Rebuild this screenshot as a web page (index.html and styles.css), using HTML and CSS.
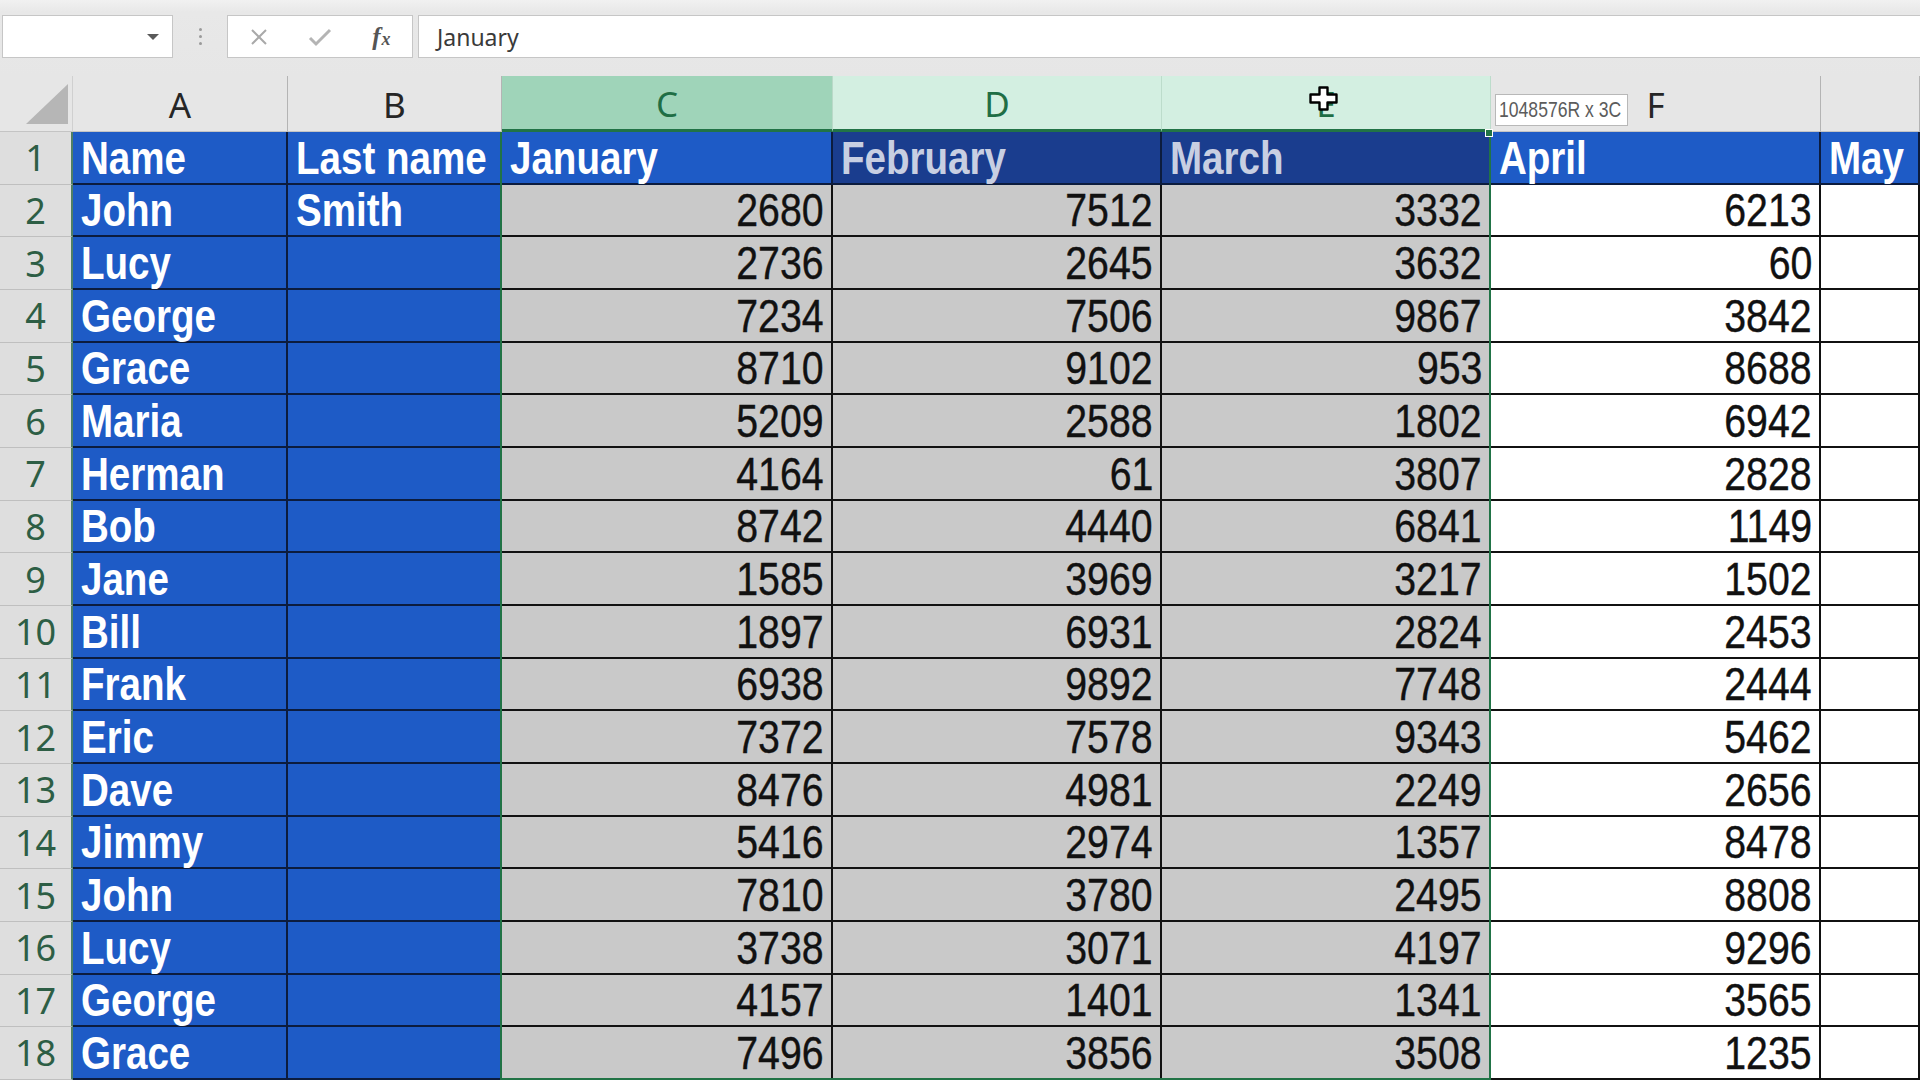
FILE: index.html
```html
<!DOCTYPE html>
<html>
<head>
<meta charset="utf-8">
<link rel="stylesheet" href="styles.css">
</head>
<body>
<div class="toolbar">
  <div class="namebox"><span class="caret"></span></div>
  <div class="grip"><i></i><i></i><i></i></div>
  <div class="fxbox">
    <span class="btn"><svg width="18" height="18" viewBox="0 0 18 18"><path d="M2 2 L16 16 M16 2 L2 16" stroke="#a9a9a9" stroke-width="2" fill="none"/></svg></span>
    <span class="btn"><svg width="24" height="20" viewBox="0 0 24 20"><path d="M2 11 L8 17 L22 3" stroke="#b4b4b4" stroke-width="3" fill="none"/></svg></span>
    <span class="btn fx"><i>f</i><i class="fxx">x</i></span>
  </div>
  <div class="formula">January</div>
</div>
<div class="sheet">
  <div class="hd corner"><svg width="42" height="40" viewBox="0 0 42 40"><path d="M42 0 L42 40 L0 40 Z" fill="#b6b6b6"/></svg></div>
  <div class="hd">A</div>
  <div class="hd">B</div>
  <div class="hd cs">C</div>
  <div class="hd ds">D</div>
  <div class="hd ds e">E<svg class="cursor" width="29" height="25" viewBox="0 0 29 25"><path d="M10.5 1.5 H18.5 V8.5 H27.5 V16.5 H18.5 V23.5 H10.5 V16.5 H1.5 V8.5 H10.5 Z" fill="#fff" stroke="#000" stroke-width="2.4" stroke-linejoin="round"/></svg></div>
  <div class="hd f">F<span class="tip"><span>1048576R x 3C</span></span></div>
  <div class="hd"></div>

  <div class="rh">1</div><div class="c bl"><span>Name</span></div><div class="c bl"><span>Last name</span></div><div class="c bl"><span>January</span></div><div class="c dk"><span>February</span></div><div class="c dk"><span>March</span></div><div class="c bl"><span>April</span></div><div class="c bl"><span>May</span></div>
  <div class="rh">2</div><div class="c bl"><span>John</span></div><div class="c bl"><span>Smith</span></div><div class="c sel n"><span>2680</span></div><div class="c sel n"><span>7512</span></div><div class="c sel n"><span>3332</span></div><div class="c n"><span>6213</span></div><div class="c"></div>
  <div class="rh">3</div><div class="c bl"><span>Lucy</span></div><div class="c bl"></div><div class="c sel n"><span>2736</span></div><div class="c sel n"><span>2645</span></div><div class="c sel n"><span>3632</span></div><div class="c n"><span>60</span></div><div class="c"></div>
  <div class="rh">4</div><div class="c bl"><span>George</span></div><div class="c bl"></div><div class="c sel n"><span>7234</span></div><div class="c sel n"><span>7506</span></div><div class="c sel n"><span>9867</span></div><div class="c n"><span>3842</span></div><div class="c"></div>
  <div class="rh">5</div><div class="c bl"><span>Grace</span></div><div class="c bl"></div><div class="c sel n"><span>8710</span></div><div class="c sel n"><span>9102</span></div><div class="c sel n"><span>953</span></div><div class="c n"><span>8688</span></div><div class="c"></div>
  <div class="rh">6</div><div class="c bl"><span>Maria</span></div><div class="c bl"></div><div class="c sel n"><span>5209</span></div><div class="c sel n"><span>2588</span></div><div class="c sel n"><span>1802</span></div><div class="c n"><span>6942</span></div><div class="c"></div>
  <div class="rh">7</div><div class="c bl"><span>Herman</span></div><div class="c bl"></div><div class="c sel n"><span>4164</span></div><div class="c sel n"><span>61</span></div><div class="c sel n"><span>3807</span></div><div class="c n"><span>2828</span></div><div class="c"></div>
  <div class="rh">8</div><div class="c bl"><span>Bob</span></div><div class="c bl"></div><div class="c sel n"><span>8742</span></div><div class="c sel n"><span>4440</span></div><div class="c sel n"><span>6841</span></div><div class="c n"><span>1149</span></div><div class="c"></div>
  <div class="rh">9</div><div class="c bl"><span>Jane</span></div><div class="c bl"></div><div class="c sel n"><span>1585</span></div><div class="c sel n"><span>3969</span></div><div class="c sel n"><span>3217</span></div><div class="c n"><span>1502</span></div><div class="c"></div>
  <div class="rh">10</div><div class="c bl"><span>Bill</span></div><div class="c bl"></div><div class="c sel n"><span>1897</span></div><div class="c sel n"><span>6931</span></div><div class="c sel n"><span>2824</span></div><div class="c n"><span>2453</span></div><div class="c"></div>
  <div class="rh">11</div><div class="c bl"><span>Frank</span></div><div class="c bl"></div><div class="c sel n"><span>6938</span></div><div class="c sel n"><span>9892</span></div><div class="c sel n"><span>7748</span></div><div class="c n"><span>2444</span></div><div class="c"></div>
  <div class="rh">12</div><div class="c bl"><span>Eric</span></div><div class="c bl"></div><div class="c sel n"><span>7372</span></div><div class="c sel n"><span>7578</span></div><div class="c sel n"><span>9343</span></div><div class="c n"><span>5462</span></div><div class="c"></div>
  <div class="rh">13</div><div class="c bl"><span>Dave</span></div><div class="c bl"></div><div class="c sel n"><span>8476</span></div><div class="c sel n"><span>4981</span></div><div class="c sel n"><span>2249</span></div><div class="c n"><span>2656</span></div><div class="c"></div>
  <div class="rh">14</div><div class="c bl"><span>Jimmy</span></div><div class="c bl"></div><div class="c sel n"><span>5416</span></div><div class="c sel n"><span>2974</span></div><div class="c sel n"><span>1357</span></div><div class="c n"><span>8478</span></div><div class="c"></div>
  <div class="rh">15</div><div class="c bl"><span>John</span></div><div class="c bl"></div><div class="c sel n"><span>7810</span></div><div class="c sel n"><span>3780</span></div><div class="c sel n"><span>2495</span></div><div class="c n"><span>8808</span></div><div class="c"></div>
  <div class="rh">16</div><div class="c bl"><span>Lucy</span></div><div class="c bl"></div><div class="c sel n"><span>3738</span></div><div class="c sel n"><span>3071</span></div><div class="c sel n"><span>4197</span></div><div class="c n"><span>9296</span></div><div class="c"></div>
  <div class="rh">17</div><div class="c bl"><span>George</span></div><div class="c bl"></div><div class="c sel n"><span>4157</span></div><div class="c sel n"><span>1401</span></div><div class="c sel n"><span>1341</span></div><div class="c n"><span>3565</span></div><div class="c"></div>
  <div class="rh">18</div><div class="c bl"><span>Grace</span></div><div class="c bl"></div><div class="c sel n"><span>7496</span></div><div class="c sel n"><span>3856</span></div><div class="c sel n"><span>3508</span></div><div class="c n"><span>1235</span></div><div class="c"></div>

  <div class="selbox"><span class="handle"></span></div>
</div>
</body>
</html>
```
FILE: styles.css
```css
html, body {
  margin: 0;
  padding: 0;
}
body {
  width: 1920px;
  height: 1080px;
  overflow: hidden;
  background: #e6e6e6;
  font-family: "Noto Sans", "Open Sans", sans-serif;
}

/* ---------- formula bar ---------- */
.toolbar {
  height: 76px;
  box-sizing: border-box;
  padding-top: 15px;
  display: flex;
  align-items: flex-start;
  background: linear-gradient(#f1f1f1 0px, #e8e8e8 12px, #e6e6e6 76px);
}
.namebox {
  width: 171px;
  height: 43px;
  margin-left: 2px;
  box-sizing: border-box;
  background: #fff;
  border: 1px solid #c6c6c6;
  display: flex;
  align-items: center;
  justify-content: flex-end;
  padding-right: 13px;
}
.caret {
  width: 0;
  height: 0;
  border-left: 6px solid transparent;
  border-right: 6px solid transparent;
  border-top: 6px solid #5a5a5a;
}
.grip {
  width: 54px;
  height: 43px;
  display: flex;
  flex-direction: column;
  align-items: center;
  justify-content: center;
  gap: 4px;
}
.grip i {
  width: 3px;
  height: 3px;
  border-radius: 50%;
  background: #9a9a9a;
}
.fxbox {
  width: 186px;
  height: 43px;
  box-sizing: border-box;
  background: #fff;
  border: 1px solid #c6c6c6;
  display: flex;
  align-items: center;
}
.btn {
  flex: 1;
  display: flex;
  align-items: center;
  justify-content: center;
}
.fx {
  font-family: "Liberation Serif", "DejaVu Serif", serif;
  font-size: 25px;
  color: #555;
  font-weight: bold;
}
.fx i {
  font-style: italic;
}
.fx .fxx {
  font-size: 18px;
  margin-left: 1px;
  margin-top: 6px;
}
.formula {
  flex: 1;
  height: 43px;
  margin-left: 5px;
  box-sizing: border-box;
  background: #fff;
  border: 1px solid #c6c6c6;
  border-right: none;
  display: flex;
  align-items: center;
  padding-left: 18px;
  font-size: 23px;
  color: #3a3a3a;
}

/* ---------- sheet ---------- */
.sheet {
  position: relative;
  display: grid;
  grid-template-columns: 73px 215px 214px 331px 329px 329px 330px 99px;
  grid-template-rows: 56px repeat(18, 52.67px);
  width: 1920px;
}
.hd {
  box-sizing: border-box;
  display: flex;
  align-items: center;
  justify-content: center;
  font-size: 35px;
  color: #262626;
  background: #e6e6e6;
  border-right: 1px solid #b4b4b4;
  border-bottom: 1px solid #c4c4c4;
  padding-top: 2px;
}
.hd.corner {
  justify-content: flex-end;
  align-items: flex-end;
  padding: 0 4px 7px 0;
  border-right: 1px solid #d0d0d0;
}
.hd.cs {
  background: #9fd4b9;
  color: #1f6e45;
  border-right: 1px solid #b9d9c8;
  border-bottom: 3px solid #217346;
}
.hd.ds {
  background: #d3efe1;
  color: #1f6e45;
  border-right: 1px solid #bcdccb;
  border-bottom: 3px solid #217346;
}
.hd.e {
  position: relative;
}
.cursor {
  position: absolute;
  left: 147px;
  top: 10px;
}
.hd.f {
  position: relative;
}
.tip {
  position: absolute;
  left: 4px;
  top: 18px;
  width: 133px;
  height: 32px;
  box-sizing: border-box;
  padding: 0 3px;
  background: #fff;
  border: 1px solid #b8b8b8;
  color: #5c5c5c;
  font-family: "Liberation Sans", Arial, sans-serif;
  font-size: 22px;
  line-height: 30px;
  white-space: nowrap;
}
.tip span {
  display: inline-block;
  transform: scaleX(0.8);
  transform-origin: left center;
}

.rh {
  box-sizing: border-box;
  display: flex;
  align-items: center;
  justify-content: center;
  background: #dedede;
  color: #2d5e45;
  font-size: 36px;
  border-bottom: 1px solid #bfbfbf;
  border-right: 2px solid #4f7f65;
}

.c {
  box-sizing: border-box;
  display: flex;
  align-items: flex-end;
  padding: 0 7px 2px 8px;
  border-right: 2px solid #111;
  border-bottom: 2px solid #111;
  background: #fff;
  color: #111;
  font-family: "Liberation Sans", Arial, sans-serif;
  font-size: 47px;
  line-height: 1;
  white-space: nowrap;
  min-width: 0;
}
.c span {
  display: inline-block;
  transform: scaleX(0.82);
  transform-origin: left bottom;
}
.c.n {
  justify-content: flex-end;
}
.c.n span {
  transform: scaleX(0.835);
  transform-origin: right bottom;
  -webkit-text-stroke: 0.4px #111;
}
.c.bl {
  background: #1e5bc6;
  color: #fff;
  font-weight: bold;
  border-color: #0c1c3e;
}
.c.dk {
  background: #1a3d8e;
  color: #c8cfe2;
  font-weight: bold;
  border-color: #0c1c3e;
}
.c.sel {
  background: #c9c9c9;
}

.selbox {
  position: absolute;
  grid-column: 4 / 7;
  grid-row: 2 / 20;
  top: 0;
  bottom: 0;
  left: -2px;
  right: 0;
  border: 2px solid #217346;
  border-top: none;
  box-sizing: border-box;
  pointer-events: none;
  z-index: 2;
}
.handle {
  position: absolute;
  right: -4px;
  top: -3px;
  width: 6px;
  height: 6px;
  background: #217346;
  border: 1px solid #fff;
}
```
